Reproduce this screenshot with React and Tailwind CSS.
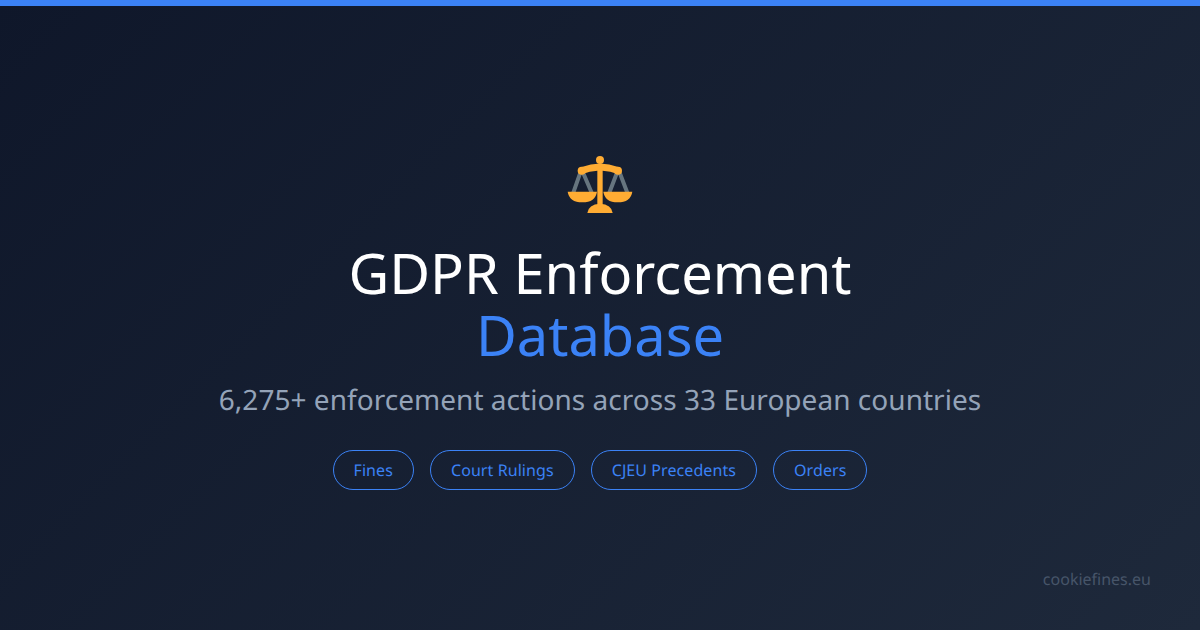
import React from "react";

const tags = ["Fines", "Court Rulings", "CJEU Precedents", "Orders"];

const ScalesIcon = () => (
  <svg width="68" height="64" viewBox="48 48 204 192" className="block">
    <path d="M92 95 L70 158 M98 95 L125 158 M202 95 L178 158 M208 95 L232 158" stroke="#66757f" strokeWidth="12" fill="none" />
    <circle cx="150" cy="60" r="12" fill="#ffac33" />
    <path d="M95 81 Q150 60 205 81 L205 103 Q180 93 158 92 V200 H142 V92 Q120 93 95 103 Z" fill="#ffac33" />
    <circle cx="95" cy="92" r="12" fill="#ffac33" />
    <circle cx="204" cy="92" r="12" fill="#ffac33" />
    <path d="M53 155 H141 Q136 187 97 187 Q58 187 53 155 Z" fill="#ffac33" />
    <path d="M160 155 H247 Q242 187 203 187 Q165 187 160 155 Z" fill="#ffac33" />
    <path d="M112 219 Q115 193 150 191 Q185 193 188 219 Z" fill="#ffac33" />
  </svg>
);

const App = () => {
  return (
    <div className="relative flex h-[630px] w-[1200px] flex-col overflow-hidden bg-[linear-gradient(135deg,#0f172a_0%,#1e293b_100%)] font-['Noto_Sans',sans-serif] antialiased [text-rendering:geometricPrecision]">
      <div className="h-[6px] bg-[#3b82f6]" />
      <div className="flex flex-1 flex-col items-center pt-[150px]">
        <ScalesIcon />
        <h1 className="mt-[22px] text-center text-[56px] leading-[62px] font-normal text-white">
          GDPR Enforcement
          <br />
          <span className="text-[#3b82f6]">Database</span>
        </h1>
        <p className="mt-[15px] text-[28px] leading-[38px] tracking-[0.035px] text-[#94a3b8]">
          6,275+ enforcement actions across 33 European countries
        </p>
        <ul className="mt-[31px] flex gap-4">
          {tags.map((tag) => (
            <li
              key={tag}
              className="flex h-[40px] items-center rounded-[20px] border border-[#3b82f6] px-5 text-[16px] tracking-[0.08px] text-[#3b82f6]"
            >
              {tag}
            </li>
          ))}
        </ul>
      </div>
      <div className="absolute right-[49px] bottom-[39px] text-[16px] leading-[24px] text-[#475569]">
        cookiefines.eu
      </div>
    </div>
  );
};

export default App;
